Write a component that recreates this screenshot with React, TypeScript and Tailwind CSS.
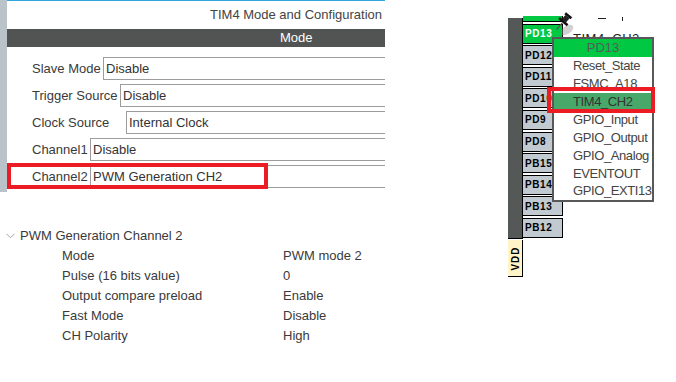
import React from "react";

const rows = [
  { label: "Slave Mode", value: "Disable", w: "w-[96px]" },
  { label: "Trigger Source", value: "Disable", w: "w-[113px]" },
  { label: "Clock Source", value: "Internal Clock", w: "w-[119px]" },
  { label: "Channel1", value: "Disable", w: "w-[83px]" },
  { label: "Channel2", value: "PWM Generation CH2", w: "w-[83px]" },
];

const params = [
  ["Mode", "PWM mode 2"],
  ["Pulse (16 bits value)", "0"],
  ["Output compare preload", "Enable"],
  ["Fast Mode", "Disable"],
  ["CH Polarity", "High"],
];

const pins = ["PD12", "PD11", "PD10", "PD9", "PD8", "PB15", "PB14", "PB13", "PB12"];

const menu = [
  "Reset_State",
  "FSMC_A18",
  "TIM4_CH2",
  "GPIO_Input",
  "GPIO_Output",
  "GPIO_Analog",
  "EVENTOUT",
  "GPIO_EXTI13",
];

export default function App() {
  return (
    <div className="relative flex w-[676px] h-[382px] overflow-hidden bg-white font-['Liberation_Sans',Arial,sans-serif] text-[13px] text-[#3a3a3a]">
      {/* Left configuration panel */}
      <div className="w-[385px] flex flex-col">
        <div className="flex h-[192px]">
          <div className="w-[7px] bg-[#b9c3c9]" />
          <div className="flex-1 flex flex-col border-t border-[#2ea6de]">
            <div className="h-[28px] flex items-center justify-end pr-[3px] text-[#444]">
              TIM4 Mode and Configuration
            </div>
            <div className="h-[18px] bg-[#525453] text-white flex items-center pl-[273px]">
              Mode
            </div>
            <div className="flex flex-col pt-[10px]">
              {rows.map((r) => (
                <div key={r.label} className="flex h-[27px]">
                  <div className={`${r.w} shrink-0 pl-[25px] h-[23px] flex items-center whitespace-nowrap`}>
                    {r.label}
                  </div>
                  <div className="flex-1 h-[23px] border border-r-0 border-[#9c9c9c] flex items-center pl-[2px] text-[#333] whitespace-nowrap">
                    {r.value}
                  </div>
                </div>
              ))}
            </div>
          </div>
        </div>

        <div className="mt-[34px] h-[20px] flex items-center">
          <svg width="9" height="6" viewBox="0 0 9 6" className="ml-[6px] mr-[5px]">
            <polyline points="0.5,0.8 4.5,4.8 8.5,0.8" fill="none" stroke="#a5a5a5" strokeWidth="1" />
          </svg>
          <span>PWM Generation Channel 2</span>
        </div>
        {params.map(([k, v]) => (
          <div key={k} className="h-[20px] flex items-center">
            <div className="w-[283px] pl-[62px] shrink-0 whitespace-nowrap">{k}</div>
            <div className="whitespace-nowrap">{v}</div>
          </div>
        ))}
      </div>

      {/* Red highlight on Channel2 */}
      <div className="absolute left-[7px] top-[163px] w-[261px] h-[26px] border-[4px] border-[#ec1c24]" />

      {/* Chip diagram */}
      <div className="absolute left-[508px] top-[18px] w-[15px] h-[221px] bg-[#545856] border-r border-b border-black" />
      <div className="absolute left-[523px] top-[16px] w-[40px] flex flex-col gap-[1.6px]">
        <div className="h-[6px] bg-[#00c843] border-r border-b border-black" />
        <div className="h-[20px] bg-[#00c843] border-y border-r border-black flex items-center pl-[2px] text-[10px] font-bold tracking-[0.6px] text-white">
          PD13
        </div>
        {pins.map((p) => (
          <div
            key={p}
            className="h-[20px] bg-[#c1cad0] border-y border-r border-black flex items-center pl-[2px] text-[10px] font-bold tracking-[0.6px] text-black"
          >
            {p}
          </div>
        ))}
      </div>
      <div className="absolute left-[508px] top-[240px] w-[15px] h-[37px] bg-[#fff5c8] border-r border-b border-black flex items-center justify-center">
        <span className="-rotate-90 text-[10px] font-bold tracking-[1px] text-black">VDD</span>
      </div>

      {/* pin label fragments */}
      <div className="absolute left-[598px] top-[18px] w-[8px] h-[1px] bg-[#222]" />
      <div className="absolute left-[622px] top-[17px] w-[1px] h-[4px] bg-[#222]" />
      <div className="absolute left-[573px] top-[29px] text-[13px] text-[#222] tracking-[0.5px]">TIM4_CH2</div>

      {/* pushpin */}
      <svg className="absolute left-[550px] top-[11px]" width="28" height="26" viewBox="0 0 28 26">
        <ellipse cx="17" cy="19" rx="7" ry="4" fill="#9a9a9a" opacity="0.45" transform="rotate(-35 17 19)" />
        <g transform="rotate(40 13 11)">
          <rect x="9" y="1.5" width="8" height="2.6" fill="#111" />
          <rect x="10.3" y="4" width="5.4" height="5.5" fill="#222" />
          <rect x="7.5" y="9.2" width="11" height="2.6" fill="#111" />
          <line x1="13" y1="11.8" x2="13" y2="21" stroke="#555" strokeWidth="1.3" />
        </g>
      </svg>

      {/* popup menu */}
      <div className="absolute left-[552px] top-[37px] w-[102px] h-[165px] border-2 border-[#585858] bg-white flex flex-col overflow-hidden">
        <div className="h-[18px] shrink-0 bg-[#00c843] text-[#5a5a5a] flex items-center justify-center">PD13</div>
        {menu.map((m) => (
          <div
            key={m}
            className={`h-[17.9px] shrink-0 pl-[19px] flex items-center whitespace-nowrap tracking-[-0.4px] ${
              m === "TIM4_CH2" ? "bg-[#48a86a] text-[#333]" : "text-[#444]"
            }`}
          >
            {m}
          </div>
        ))}
      </div>

      {/* Red highlight on TIM4_CH2 */}
      <div className="absolute left-[547px] top-[87px] w-[108px] h-[26px] border-[4px] border-[#ec1c24]" />
    </div>
  );
}
